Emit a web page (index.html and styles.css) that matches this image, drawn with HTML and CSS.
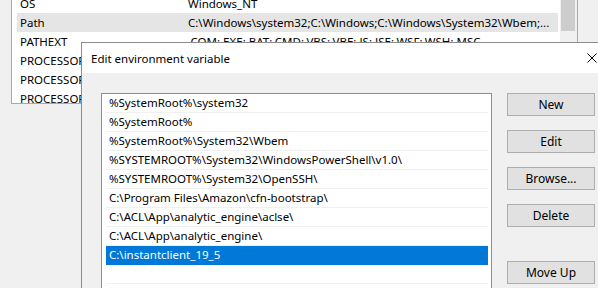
FILE: index.html
```html
<!DOCTYPE html>
<html lang="en">
<head>
    <meta charset="UTF-8">
    <meta name="viewport" content="width=device-width, initial-scale=1.0">
    <title>Edit environment variable</title>
    <link rel="stylesheet" href="styles.css">
</head>
<body>
    <div class="varlist">
        <div class="varrows">
            <div class="varrow"><span class="varname">OS</span><span>Windows_NT</span></div>
            <div class="varrow hover"><span class="varname">Path</span><span>C:\Windows\system32;C:\Windows;C:\Windows\System32\Wbem;...</span></div>
            <div class="varrow"><span class="varname">PATHEXT</span><span>.COM;.EXE;.BAT;.CMD;.VBS;.VBE;.JS;.JSE;.WSF;.WSH;.MSC</span></div>
            <div class="varrow"><span class="varname">PROCESSOR_ARCHITECTURE</span><span>AMD64</span></div>
            <div class="varrow"><span class="varname">PROCESSOR_IDENTIFIER</span><span>Intel64 Family 6 Model 85</span></div>
            <div class="varrow"><span class="varname">PROCESSOR_LEVEL</span><span>6</span></div>
        </div>
        <div class="scrollbar"><div class="thumb"></div></div>
    </div>

    <div class="dialog">
        <div class="titlebar">
            <span class="title">Edit environment variable</span>
            <span class="close">
                <svg width="10" height="10" viewBox="0 0 10 10">
                    <path d="M0.5 0.5 L9.5 9.5 M9.5 0.5 L0.5 9.5" stroke="#000" stroke-width="1" fill="none"/>
                </svg>
            </span>
        </div>
        <div class="dialog-body">
            <div class="pathlist">
                <div class="pathrow">%SystemRoot%\system32</div>
                <div class="pathrow">%SystemRoot%</div>
                <div class="pathrow">%SystemRoot%\System32\Wbem</div>
                <div class="pathrow">%SYSTEMROOT%\System32\WindowsPowerShell\v1.0\</div>
                <div class="pathrow">%SYSTEMROOT%\System32\OpenSSH\</div>
                <div class="pathrow">C:\Program Files\Amazon\cfn-bootstrap\</div>
                <div class="pathrow">C:\ACL\App\analytic_engine\aclse\</div>
                <div class="pathrow">C:\ACL\App\analytic_engine\</div>
                <div class="pathrow selected">C:\instantclient_19_5</div>
                <div class="pathrow"></div>
            </div>
            <div class="buttons">
                <button>New</button>
                <button>Edit</button>
                <button>Browse...</button>
                <button>Delete</button>
                <button class="gap">Move Up</button>
            </div>
        </div>
    </div>
</body>
</html>
```

FILE: styles.css
```css
body {
    font-family: "Noto Sans", "Open Sans", sans-serif;
    font-size: 11.5px;
    color: #000;
    background-color: #f0f0f0;
    margin: 0;
    width: 598px;
    height: 288px;
    overflow: hidden;
    position: relative;
}

/* window behind the dialog */
.varlist {
    display: flex;
    box-sizing: border-box;
    width: 567px;
    height: 111px;
    margin: -7px 0 0 11px;
    padding-left: 5px;
    background: white;
    border: 1px solid #a9a9a9;
    overflow: hidden;
}

.varrows {
    flex: 1;
}

.varrow {
    display: flex;
    height: 19px;
    line-height: 19px;
    padding-left: 3px;
    white-space: nowrap;
    overflow: hidden;
}

.varrow.hover {
    background-color: #e5e5e5;
}

.varname {
    width: 168px;
    flex-shrink: 0;
}

.scrollbar {
    width: 17px;
    margin-left: 2px;
    background: #f0f0f0;
    padding: 0 2px 0 1px;
    box-sizing: border-box;
}

.thumb {
    height: 37px;
    background-color: #cdcdcd;
}

/* dialog */
.dialog {
    position: absolute;
    left: 81px;
    top: 42px;
    width: 535px;
    height: 246px;
    box-sizing: border-box;
    border: 1px solid #8c8c8c;
    border-bottom: none;
    background: #f0f0f0;
    overflow: hidden;
}

.titlebar {
    display: flex;
    justify-content: space-between;
    align-items: center;
    height: 30px;
    background: white;
}

.title {
    padding-left: 9px;
    font-size: 11.5px;
}

.close {
    width: 46px;
    display: flex;
    justify-content: center;
    align-items: center;
}

.dialog-body {
    display: flex;
    gap: 15px;
    padding: 20px 20px 0 19px;
}

.pathlist {
    box-sizing: border-box;
    width: 391px;
    height: 230px;
    padding: 0 3px 0 4px;
    background: white;
    border: 1px solid #8f8f8f;
}

.pathrow {
    height: 18px;
    line-height: 18px;
    padding-left: 3px;
    border-bottom: 1px solid #f0f0f0;
    white-space: nowrap;
    overflow: hidden;
}

.pathrow.selected {
    background-color: #0078d7;
    border-bottom-color: #0078d7;
    color: white;
}

.buttons {
    display: flex;
    flex-direction: column;
    gap: 14px;
}

button {
    width: 88px;
    height: 23px;
    padding: 0;
    font-family: inherit;
    font-size: 12px;
    color: #000;
    background-color: #e1e1e1;
    border: 1px solid #adadad;
}

    button.gap {
        margin-top: 20px;
    }
```
